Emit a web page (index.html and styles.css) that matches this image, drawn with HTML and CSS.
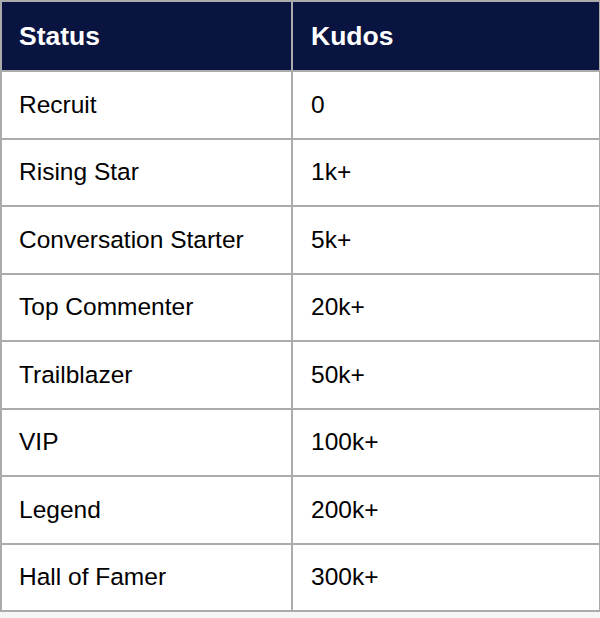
FILE: index.html
```html
<!DOCTYPE html>
<html>
<head>
<meta charset="utf-8">
<link rel="stylesheet" href="styles.css">
</head>
<body>
<table class="tiers">
  <colgroup><col class="c1"><col class="c2"></colgroup>
  <thead>
    <tr><th>Status</th><th>Kudos</th></tr>
  </thead>
  <tbody>
    <tr><td>Recruit</td><td>0</td></tr>
    <tr><td>Rising Star</td><td>1k+</td></tr>
    <tr><td>Conversation Starter</td><td>5k+</td></tr>
    <tr><td>Top Commenter</td><td>20k+</td></tr>
    <tr><td>Trailblazer</td><td>50k+</td></tr>
    <tr><td>VIP</td><td>100k+</td></tr>
    <tr><td>Legend</td><td>200k+</td></tr>
    <tr><td>Hall of Famer</td><td>300k+</td></tr>
  </tbody>
</table>
</body>
</html>
```
FILE: styles.css
```css
html, body {
  margin: 0;
  padding: 0;
  background: #f5f5f5;
}
.tiers {
  border-collapse: collapse;
  table-layout: fixed;
  width: 599px;
  font-family: "Liberation Sans", Arial, sans-serif;
  background: #ffffff;
}
.c1 { width: 291px; }
.c2 { width: 308px; }
.tiers th, .tiers td {
  border: 2px solid #ababab;
  text-align: left;
  padding: 0 17px;
  vertical-align: middle;
}
.tiers td + td, .tiers th + th {
  padding-left: 18px;
}
.tiers th {
  background: #0a1440;
  color: #ffffff;
  font-weight: bold;
  font-size: 26.5px;
  height: 68px;
}
.tiers td {
  color: #000000;
  font-size: 24.5px;
  height: 65.5px;
}
```
